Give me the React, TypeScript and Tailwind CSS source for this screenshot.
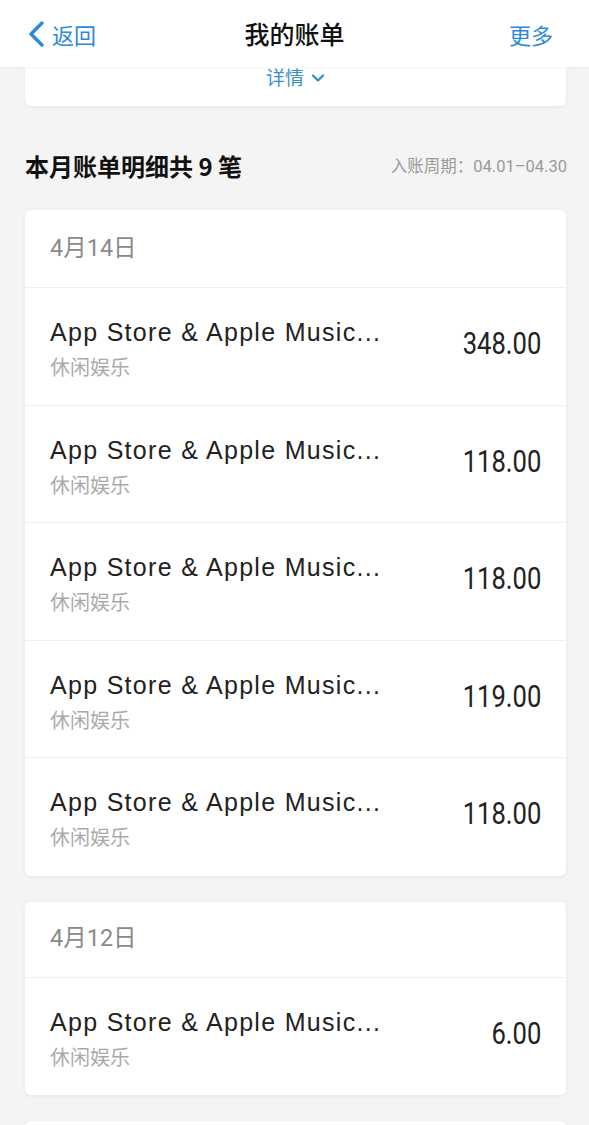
import React from "react";

const items1 = ["348.00", "118.00", "118.00", "119.00", "118.00"];

function Row({ amount, last }: { amount: string; last?: boolean }) {
  return (
    <div className={`flex h-[117.5px] justify-between px-[25px] ${last ? "" : "border-b border-[#efefef]"}`}>
      <div className="pt-[29px]">
        <div className="text-[25px] leading-[30px] tracking-[1.3px] text-[#222] font-['Liberation_Sans','Noto_Sans_CJK_SC',sans-serif]">
          App Store &amp; Apple Music...
        </div>
        <div className="mt-[6px] text-[20px] leading-[27px] text-[#aaaaaa] font-['Noto_Sans_CJK_SC',sans-serif]">
          休闲娱乐
        </div>
      </div>
      <div className="pt-[37px]">
        <div className="origin-right scale-x-[0.8] text-[32px] leading-[36px] text-[#222] font-['Roboto',sans-serif]">
          {amount}
        </div>
      </div>
    </div>
  );
}

function DateHead({ text, h }: { text: string; h: string }) {
  return (
    <div className={`flex items-center border-b border-[#efefef] px-[25px] ${h}`}>
      <span className="text-[23.5px] text-[#8a8a8a] font-['Roboto','Noto_Sans_CJK_SC',sans-serif] leading-none">
        {text}
      </span>
    </div>
  );
}

export default function App() {
  return (
    <div className="h-[1125px] w-[589px] overflow-hidden bg-[#f4f4f4] font-['Noto_Sans_CJK_SC',sans-serif]">
      {/* header */}
      <div className="relative z-10 flex h-[67px] items-center justify-between bg-white px-[28px] shadow-[0_1px_2px_rgba(0,0,0,0.04)]">
        <div className="flex items-center text-[#2d8ad8]">
          <svg width="17" height="26" viewBox="0 0 17 26" fill="none" className="mr-[7px]">
            <path d="M14 2 L3 13 L14 24" stroke="#2d8ad8" strokeWidth="3.4" strokeLinecap="round" strokeLinejoin="round" />
          </svg>
          <span className="text-[22px] leading-none">返回</span>
        </div>
        <div className="absolute left-1/2 -translate-x-1/2 text-[25px] font-medium leading-none text-[#111]">
          我的账单
        </div>
        <span className="mr-[8px] text-[22px] leading-none text-[#2d8ad8]">更多</span>
      </div>

      {/* top card remainder */}
      <div className="ml-[25px] mr-[23px] flex h-[39px] items-start justify-center rounded-b-[6px] bg-white shadow-[0_1px_4px_rgba(0,0,0,0.06)]">
        <span className="-mt-[1px] flex items-center text-[19px] leading-[22px] text-[#3b8fc8]">
          详情
          <svg width="14" height="10" viewBox="0 0 14 10" className="ml-[7px] mt-[2px]">
            <path d="M2 2.5 L7 7.5 L12 2.5" stroke="#3b8fc8" strokeWidth="2.4" fill="none" strokeLinecap="round" strokeLinejoin="round" />
          </svg>
        </span>
      </div>

      {/* section header */}
      <div className="mt-[45px] flex items-center justify-between pl-[25px] pr-[22px]">
        <span className="text-[24px] font-bold leading-[28px] text-[#111]">本月账单明细共 9 笔</span>
        <span className="text-[16.5px] leading-[28px] text-[#9a9a9a]">
          入账周期：<span className="font-['Roboto',sans-serif]">04.01–04.30</span>
        </span>
      </div>

      {/* card 1 */}
      <div className="ml-[25px] mr-[23px] mt-[29px] rounded-[6px] bg-white shadow-[0_1px_5px_rgba(0,0,0,0.06)]">
        <DateHead text="4月14日" h="h-[78px]" />
        {items1.map((a, i) => (
          <Row key={i} amount={a} last={i === items1.length - 1} />
        ))}
      </div>

      {/* card 2 */}
      <div className="ml-[25px] mr-[23px] mt-[26px] rounded-[6px] bg-white shadow-[0_1px_5px_rgba(0,0,0,0.06)]">
        <DateHead text="4月12日" h="h-[76px]" />
        <Row amount="6.00" last />
      </div>

      {/* card 3 (cut off) */}
      <div className="ml-[25px] mr-[23px] mt-[26px] h-[60px] rounded-[6px] bg-white shadow-[0_1px_5px_rgba(0,0,0,0.06)]" />
    </div>
  );
}
